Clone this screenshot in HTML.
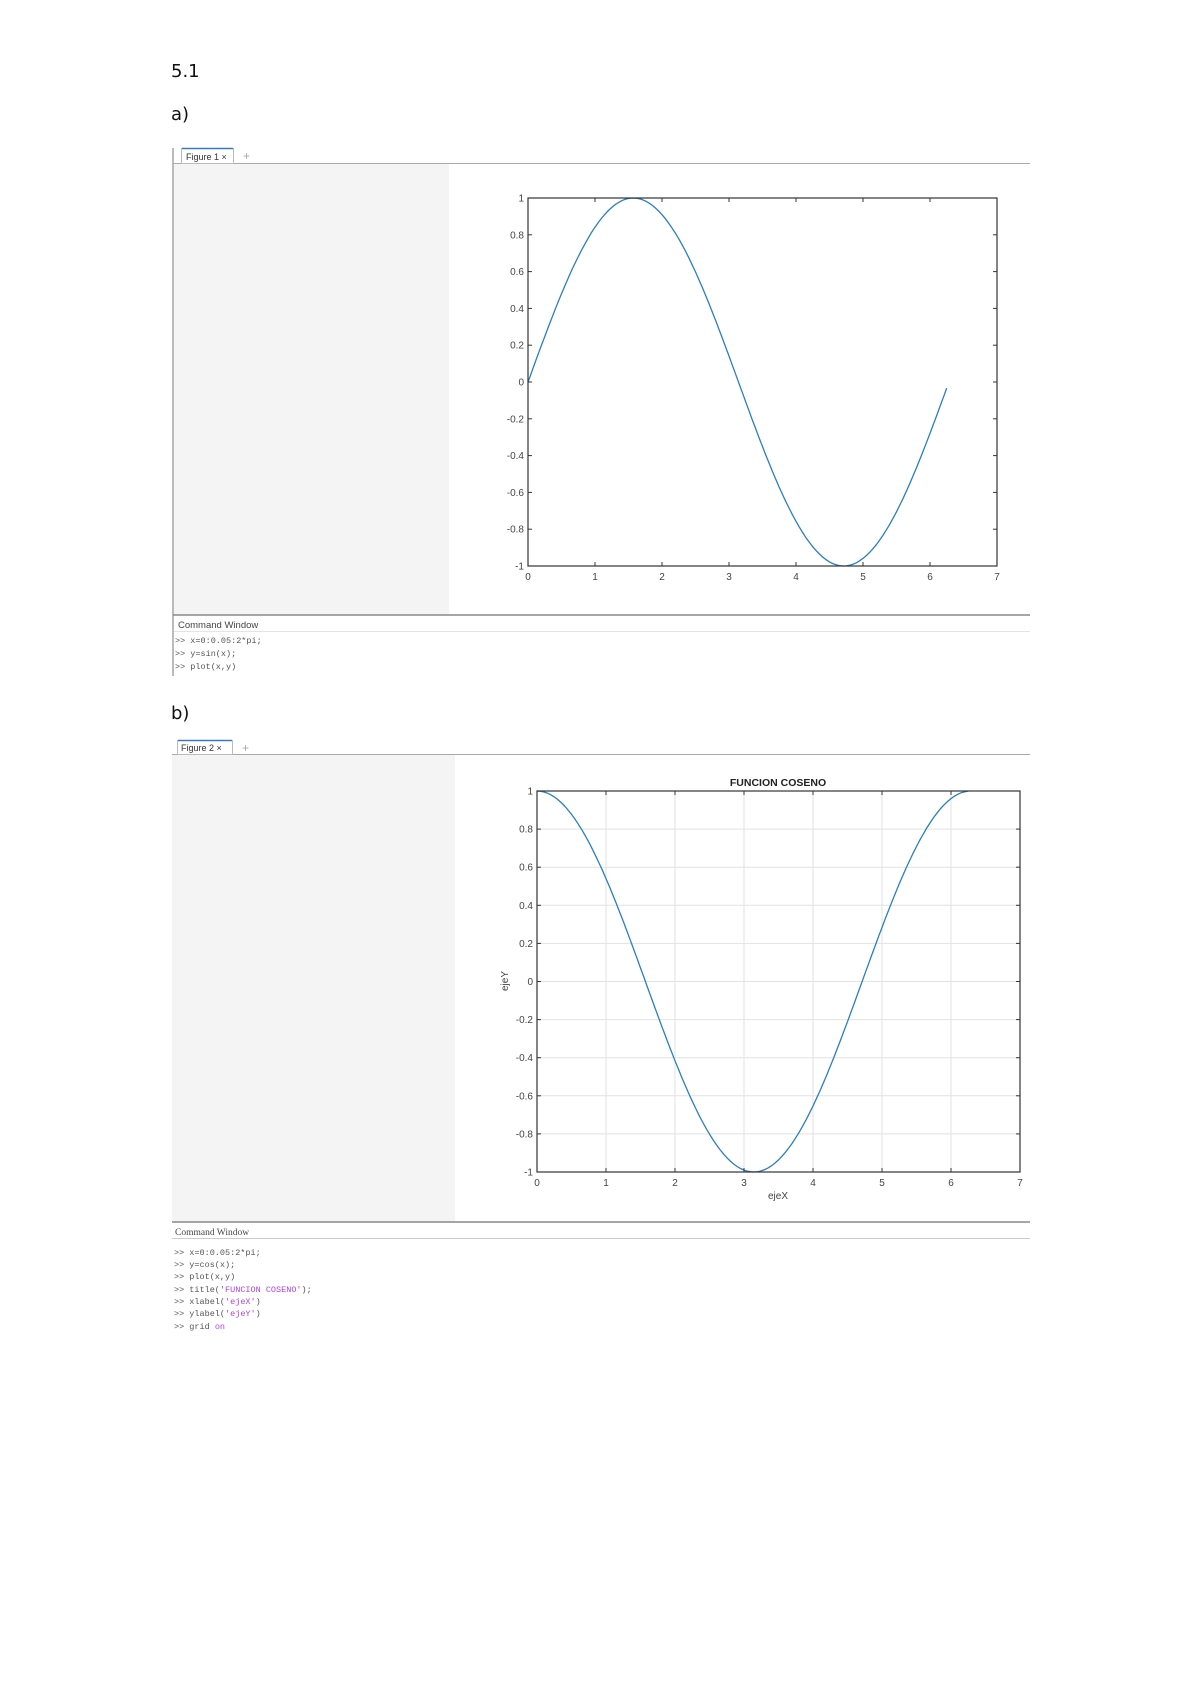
<!DOCTYPE html>
<html><head><meta charset="utf-8"><style>
html,body{margin:0;padding:0;background:#fff;}
body{width:1200px;height:1696px;position:relative;overflow:hidden;font-family:"Liberation Sans",sans-serif;}
.h{position:absolute;left:171px;font-family:"DejaVu Sans","Liberation Sans",sans-serif;font-size:18px;color:#111;}
</style></head><body>
<div class="h" style="top:61px">5.1</div>
<div class="h" style="top:104px">a)</div>
<div class="h" style="top:703px">b)</div>
<svg id="s" width="1200" height="1696" style="position:absolute;left:0;top:0" xmlns="http://www.w3.org/2000/svg" font-family="Liberation Sans, sans-serif">
<line x1="173" y1="148" x2="173" y2="676" stroke="#777" stroke-width="1"/>
<rect x="174" y="164" width="275" height="451" fill="#f4f4f4"/>
<line x1="173" y1="163.5" x2="1030" y2="163.5" stroke="#aaa"/>
<rect x="181.5" y="148.5" width="52" height="15" fill="#fff" stroke="#bbb"/>
<line x1="182" y1="148.5" x2="233" y2="148.5" stroke="#3a78c2" stroke-width="1.5"/>
<text x="186" y="160" font-size="9" fill="#333">Figure 1 ×</text>
<text x="243" y="160" font-size="12" fill="#aaa">+</text>
<line x1="173" y1="615" x2="1030" y2="615" stroke="#888" stroke-width="1.5"/>
<line x1="174" y1="631.5" x2="1030" y2="631.5" stroke="#e4e4e4"/>
<text x="178" y="628" font-size="9.5" fill="#444">Command Window</text>
<g font-family="Liberation Mono, monospace" font-size="8.5" fill="#555">
<text x="175" y="643">&gt;&gt; x=0:0.05:2*pi;</text>
<text x="175" y="656">&gt;&gt; y=sin(x);</text>
<text x="175" y="669">&gt;&gt; plot(x,y)</text>
</g>
<g id="ax1"></g>
<rect x="172" y="755" width="283" height="467" fill="#f4f4f4"/>
<line x1="172" y1="754.5" x2="1030" y2="754.5" stroke="#aaa"/>
<rect x="177.5" y="740.5" width="55" height="14" fill="#fff" stroke="#bbb"/>
<line x1="178" y1="740.5" x2="232" y2="740.5" stroke="#3a78c2" stroke-width="1.5"/>
<text x="181" y="751" font-size="9" fill="#333">Figure 2 ×</text>
<text x="242" y="752" font-size="12" fill="#aaa">+</text>
<line x1="172" y1="1222" x2="1030" y2="1222" stroke="#888" stroke-width="1.5"/>
<line x1="172" y1="1238.5" x2="1030" y2="1238.5" stroke="#ccc"/>
<text x="175" y="1235" font-size="9.5" fill="#444" font-family="Liberation Serif, serif">Command Window</text>
<g font-family="Liberation Mono, monospace" font-size="8.5" fill="#555">
<text x="174" y="1255">&gt;&gt; x=0:0.05:2*pi;</text>
<text x="174" y="1267">&gt;&gt; y=cos(x);</text>
<text x="174" y="1279">&gt;&gt; plot(x,y)</text>
<text x="174" y="1292">&gt;&gt; title(<tspan fill="#b040e0">'FUNCION COSENO'</tspan>);</text>
<text x="174" y="1304">&gt;&gt; xlabel(<tspan fill="#b040e0">'ejeX'</tspan>)</text>
<text x="174" y="1316">&gt;&gt; ylabel(<tspan fill="#b040e0">'ejeY'</tspan>)</text>
<text x="174" y="1329">&gt;&gt; grid <tspan fill="#b040e0">on</tspan></text>
</g>
<text x="778" y="786" font-size="10.5" font-weight="bold" text-anchor="middle" fill="#222">FUNCION COSENO</text>
<text x="778" y="1199" font-size="10" text-anchor="middle" fill="#444">ejeX</text>
<text x="0" y="0" font-size="10" text-anchor="middle" fill="#444" transform="translate(508,981) rotate(-90)">ejeY</text>
<g id="ax2"></g>
</svg>
<script>
var NS="http://www.w3.org/2000/svg";
function el(p,t,a,txt){var e=document.createElementNS(NS,t);for(var k in a)e.setAttribute(k,a[k]);if(txt!=null)e.textContent=txt;p.appendChild(e);return e;}
function axes(g,L,R,T,B,grid,f){
 var sx=(R-L)/7,sy=(B-T)/2;
 if(grid){for(var i=1;i<7;i++)el(g,"line",{x1:L+i*sx,y1:T,x2:L+i*sx,y2:B,stroke:"#e2e2e2"});
  for(var j=1;j<10;j++){var y=T+j*(B-T)/10;el(g,"line",{x1:L,y1:y,x2:R,y2:y,stroke:"#e2e2e2"});}}
 var pts=[];for(var x=0;x<=2*Math.PI+1e-9;x+=0.05)pts.push((L+x*sx).toFixed(1)+","+(T+(1-f(x))*sy).toFixed(1));
 el(g,"polyline",{points:pts.join(" "),fill:"none",stroke:"#2a7fc0","stroke-width":1.3});
 el(g,"rect",{x:L,y:T,width:R-L,height:B-T,fill:"none",stroke:"#333","stroke-width":1.2});
 for(var i=0;i<=7;i++){var x=L+i*sx;el(g,"line",{x1:x,y1:B,x2:x,y2:B-4,stroke:"#333"});el(g,"line",{x1:x,y1:T,x2:x,y2:T+4,stroke:"#333"});
  el(g,"text",{x:x,y:B+14,"font-size":10,"text-anchor":"middle",fill:"#444"},String(i));}
 for(var j=0;j<=10;j++){var y=T+j*(B-T)/10;el(g,"line",{x1:L,y1:y,x2:L+4,y2:y,stroke:"#333"});el(g,"line",{x1:R,y1:y,x2:R-4,y2:y,stroke:"#333"});
  var v=(1-j*0.2);v=Math.round(v*10)/10;el(g,"text",{x:L-4,y:y+3.5,"font-size":10,"text-anchor":"end",fill:"#444"},String(v));}
}
axes(document.getElementById("ax1"),528,997,198,566,false,Math.sin);
axes(document.getElementById("ax2"),537,1020,791,1172,true,Math.cos);
</script>
</body></html>
